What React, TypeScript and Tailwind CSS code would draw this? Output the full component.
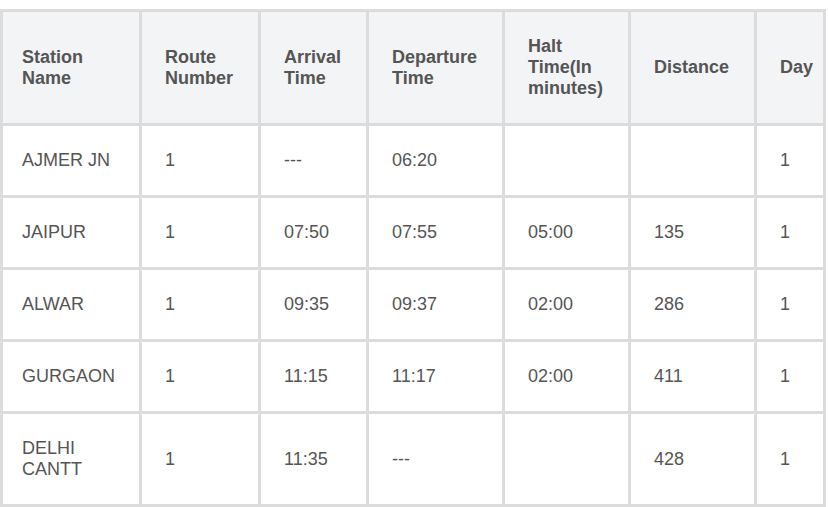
const headers = ['Station Name', 'Route Number', 'Arrival Time', 'Departure Time', 'Halt Time(In minutes)', 'Distance', 'Day'];

const rows = [
  ['AJMER JN', '1', '---', '06:20', '', '', '1'],
  ['JAIPUR', '1', '07:50', '07:55', '05:00', '135', '1'],
  ['ALWAR', '1', '09:35', '09:37', '02:00', '286', '1'],
  ['GURGAON', '1', '11:15', '11:17', '02:00', '411', '1'],
  ['DELHI CANTT', '1', '11:35', '---', '', '428', '1'],
];

const App = () => {
  return (
    <div className="w-[828px] h-[507px] bg-white pt-[9px] overflow-hidden" style={{ fontFamily: '"Liberation Sans", Arial, sans-serif' }}>
      <div className="w-[826px] grid grid-cols-[136px_116px_105px_133px_123px_123px_66px] gap-[3px] p-[3px] bg-[#dcdcdc] text-[18px] leading-[21px] text-[#555555]">
        {headers.map((h, i) => (
          <div
            key={h}
            className={`h-[111px] bg-[#f3f4f6] font-bold flex items-center ${i === 0 ? 'pl-[19px]' : 'pl-[23px]'} pr-[10px]`}
          >
            {h}
          </div>
        ))}
        {rows.map((row, r) =>
          row.map((cell, c) => (
            <div
              key={`${r}-${c}`}
              className={`${r === rows.length - 1 ? 'h-[90px]' : 'h-[69px]'} bg-white flex items-center pr-[10px] ${c === 0 ? 'pl-[19px]' : 'pl-[23px]'}`}
            >
              {cell}
            </div>
          ))
        )}
      </div>
    </div>
  );
};

export default App;
